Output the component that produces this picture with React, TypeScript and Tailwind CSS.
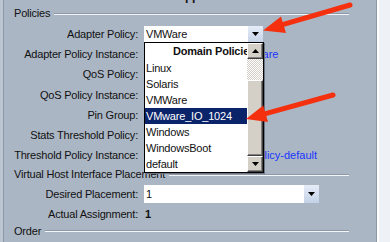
import React from 'react';

const Tri = ({ up = false }: { up?: boolean }) => (
  <svg width="7" height="4" viewBox="0 0 7 4">
    <polygon points={up ? '0,4 7,4 3.5,0' : '0,0 7,0 3.5,4'} fill="#000" />
  </svg>
);

const Legend = ({ title, className = '' }: { title: string; className?: string }) => (
  <div className={`ml-[10px] flex w-[335px] items-center gap-[4px] ${className}`}>
    <span className="whitespace-nowrap">{title}</span>
    <div className="h-[2px] flex-1 border-t border-b border-t-[#8e99a7] border-b-[#f3f5f8]" />
  </div>
);

const Row = ({
  label,
  children,
  className = 'h-5',
}: {
  label: string;
  children?: React.ReactNode;
  className?: string;
}) => (
  <div className={`flex items-center ${className}`}>
    <div className="w-[134px] whitespace-nowrap text-right">{label}</div>
    <div className="ml-[6px] flex items-center whitespace-nowrap">{children}</div>
  </div>
);

const SelectBox = ({ value, className }: { value: string; className: string }) => (
  <div className={`flex bg-white ${className}`}>
    <div className="flex flex-1 items-center pl-[2px]">{value}</div>
    <div className="flex w-[15px] items-center justify-center bg-linear-to-b from-[#e6edf8] to-[#c4d2e7]">
      <Tri />
    </div>
  </div>
);

const ClassicButton = ({ up = false }: { up?: boolean }) => (
  <div className="flex h-[16px] items-center justify-center border-t border-l border-t-white border-l-white border-b border-r border-b-[#404040] border-r-[#404040] bg-[#d4d0c8] shadow-[inset_-1px_-1px_#808080]">
    <Tri up={up} />
  </div>
);

const items = ['Linux', 'Solaris', 'VMWare', 'VMware_IO_1024', 'Windows', 'WindowsBoot', 'default'];

export default function App() {
  return (
    <div
      className="relative flex h-[242px] w-[390px] overflow-hidden bg-[#eef1f5] text-[11px] leading-none tracking-[-0.2px] text-[#111]"
      style={{ fontFamily: '"Liberation Sans", Arial, sans-serif' }}
    >
      <div className="w-[3px] bg-[#bcc6d2]" />
      <div className="w-[1px] bg-[#8e99a7]" />
      <div className="flex w-[372px] flex-col bg-[#abb6c4]">
        <div className="h-[5px] overflow-hidden">
          <div className="-mt-[10px] pl-[166px] text-[12px] font-bold leading-[12px]">Support</div>
        </div>
        <Legend title="Policies" className="h-[17px]" />
        <Row label="Adapter Policy:" className="mt-[2px] h-5">
          <SelectBox value="VMWare" className="h-[17px] w-[119px]" />
        </Row>
        <Row label="Adapter Policy Instance:">
          <span className="tracking-normal text-[#1a35ff]">org-root/eth-profile-VMware</span>
        </Row>
        <Row label="QoS Policy:" className="h-[21px]" />
        <Row label="QoS Policy Instance:" />
        <Row label="Pin Group:" />
        <Row label="Stats Threshold Policy:" className="h-[21px]" />
        <Row label="Threshold Policy Instance:" className="h-[19px]">
          <span className="tracking-normal text-[#1a35ff]">org-root/org-Sales/thr-policy-default</span>
        </Row>
        <Legend title="Virtual Host Interface Placement" className="h-[19px]" />
        <Row label="Desired Placement:">
          <SelectBox value="1" className="h-[18px] w-[175px]" />
        </Row>
        <Row label="Actual Assignment:">
          <span className="pl-[1px] font-bold">1</span>
        </Row>
        <Legend title="Order" className="h-[14px]" />
      </div>
      <div className="w-[1px] bg-[#8d97a3]" />
      <div className="w-[2px] bg-white" />

      {/* open dropdown list */}
      <div className="absolute left-[144px] top-[42px] flex h-[131px] w-[120px] border border-black bg-white shadow-[1px_1px_0_#6b7480]">
        <div className="flex w-[102px] flex-col overflow-hidden">
          <div className="flex h-[17px] items-center whitespace-nowrap pl-[28px] font-bold">Domain Policies</div>
          {items.map((it) => (
            <div
              key={it}
              className={`flex h-[16px] items-center whitespace-nowrap pl-[1px] ${
                it === 'VMware_IO_1024' ? 'bg-[#0a246a] text-white' : ''
              }`}
            >
              {it}
            </div>
          ))}
        </div>
        <div className="flex w-[16px] flex-col">
          <ClassicButton up />
          <div className="h-[21px] bg-[repeating-conic-gradient(#d4d0c8_0_25%,#ffffff_0_50%)] bg-[length:2px_2px]" />
          <div className="flex-1 border-t border-l border-t-white border-l-white border-b border-r border-b-[#404040] border-r-[#404040] bg-[#d4d0c8] shadow-[inset_-1px_-1px_#808080]" />
          <ClassicButton />
        </div>
      </div>

      {/* red annotation arrows */}
      <svg className="pointer-events-none absolute left-0 top-0" width="390" height="242">
        <line x1="350" y1="5" x2="280" y2="25.3" stroke="#f4300e" strokeWidth="5" strokeLinecap="round" />
        <polygon points="263,30.5 281,16.5 286,33" fill="#f4300e" />
        <line x1="333" y1="95" x2="262" y2="114.6" stroke="#f4300e" strokeWidth="5" strokeLinecap="round" />
        <polygon points="246,119 263.2,105.5 268,122" fill="#f4300e" />
      </svg>
    </div>
  );
}
